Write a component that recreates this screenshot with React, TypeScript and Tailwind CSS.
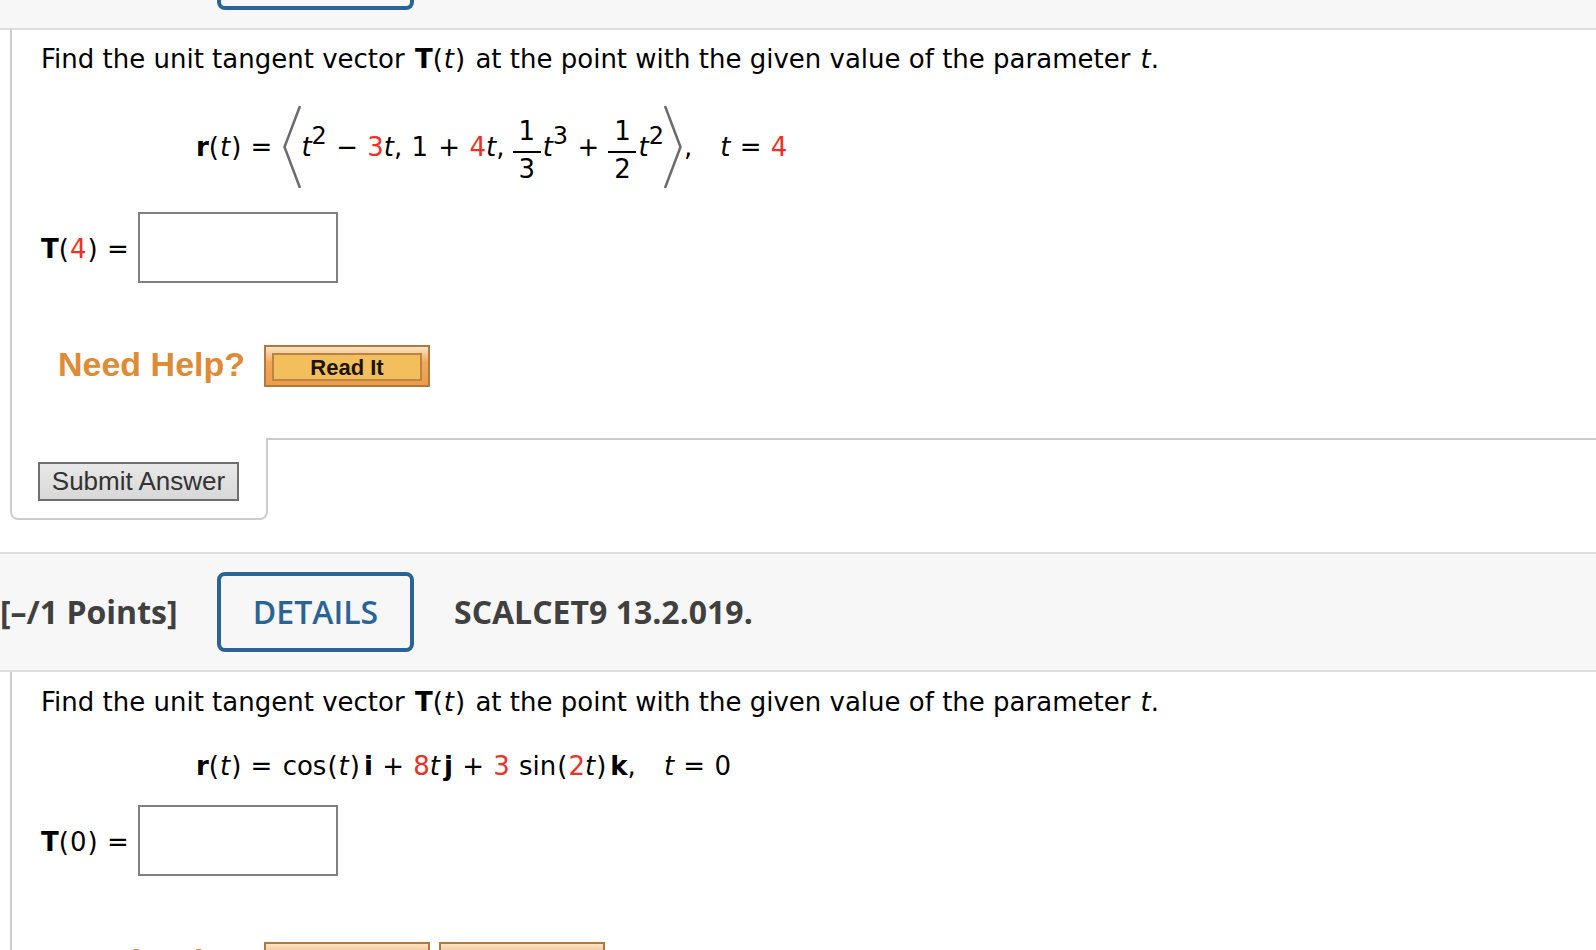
import type { ReactNode } from "react";

function Red({ children }: { children: ReactNode }) {
  return <span className="text-[#ee3124]">{children}</span>;
}

function Sup({ children }: { children: ReactNode }) {
  return <sup className="relative -top-3 align-baseline text-[24px] leading-none">{children}</sup>;
}

function Op({ children }: { children: ReactNode }) {
  return <span className="mx-px">{children}</span>;
}

function Paren({ children }: { children: ReactNode }) {
  return (
    <>
      (<span className="mx-px">{children}</span>)
    </>
  );
}

function Fraction({ top, bottom }: { top: string; bottom: string }) {
  return (
    <span className="mt-1.5 flex w-7 flex-col text-center leading-6">
      <span className="border-b-2 border-black pb-2">{top}</span>
      <span className="pt-1">{bottom}</span>
    </span>
  );
}

function AngleBracket({ side }: { side: "left" | "right" }) {
  return (
    <svg width="18" height="82" viewBox="0 0 18 82" fill="none" stroke="#6b6b6b" strokeWidth="2.5" aria-hidden="true">
      <path d={side === "left" ? "M17 0 L1.5 41 L17 82" : "M1 0 L16.5 41 L1 82"} />
    </svg>
  );
}

function QuestionHeader({ points, source }: { points: string; source: string }) {
  return (
    <header className="flex h-[120px] items-center border-y-2 border-[#ddd] bg-[#f7f7f7] font-['Open_Sans',sans-serif] text-[32px] font-bold whitespace-nowrap text-[#404040]">
      <h2 className="w-[217px]">{points}</h2>
      <button type="button" className="h-20 w-[197px] rounded-lg border-4 border-[#2a6496] font-semibold text-[#2a6496]">
        DETAILS
      </button>
      <span className="ml-10">{source}</span>
    </header>
  );
}

function Prompt() {
  return (
    <p className="leading-8">
      Find the unit tangent vector{" "}
      <b className="ml-0.5">T</b>
      <Paren>
        <i>t</i>
      </Paren>{" "}
      <span className="ml-0.5">
        at the point with the given value of the parameter <i className="ml-0.5">t</i>.
      </span>
    </p>
  );
}

function Answer({ id, at }: { id: string; at: ReactNode }) {
  return (
    <div className="flex items-center">
      <label htmlFor={id} className="w-[97px] pt-0.5 leading-8 whitespace-nowrap">
        <b>T</b>
        <Paren>{at}</Paren> <Op>=</Op>
      </label>
      <input id={id} type="text" className="h-[71px] w-[200px] border-2 border-[#808080] bg-white px-2 outline-none" />
    </div>
  );
}

function HelpButton({ children }: { children: ReactNode }) {
  return (
    <button
      type="button"
      className="h-[42px] w-[166px] border-2 border-[#b07a3e] bg-linear-to-b from-[#fde3c6] via-[#f0a95c] via-40% to-[#ec9c48] p-1.5 pb-1 text-[22px] font-bold text-[#1c1505]"
    >
      <span className="flex h-full items-center justify-center border-2 border-[#b98546] bg-[#f2bf5c]">{children}</span>
    </button>
  );
}

function NeedHelp({ options }: { options: string[] }) {
  return (
    <div className="flex items-center gap-[9px] pl-[17px] font-['Liberation_Sans',sans-serif]">
      <span className="w-[197px] pb-1 text-[34px] leading-9 font-bold whitespace-nowrap text-[#df8a35]">Need Help?</span>
      {options.map((option) => (
        <HelpButton key={option}>{option}</HelpButton>
      ))}
    </div>
  );
}

export default function App() {
  return (
    <main className="h-screen overflow-hidden bg-white font-['DejaVu_Sans',sans-serif] text-[26px] text-black">
      {/* Tail end of the previous question's header */}
      <div className="h-[30px] border-b-2 border-[#ddd] bg-[#f7f7f7] pl-[217px]">
        <button
          type="button"
          aria-label="Details"
          className="block h-2.5 w-[197px] rounded-b-lg border-4 border-t-0 border-[#2a6496]"
        />
      </div>

      <section>
        <div className="ml-2.5 h-[408px] border-l-2 border-[#ccc] pt-[13px] pl-[29px]">
          <Prompt />
          <div className="mt-[31px] ml-[155px] flex items-center leading-8 whitespace-pre">
            <span>
              <b>r</b>
              <Paren>
                <i>t</i>
              </Paren>{" "}
              <Op>=</Op>
            </span>
            <span className="ml-2.5">
              <AngleBracket side="left" />
            </span>
            <span>
              <i>t</i>
              <Sup>2</Sup> <Op>−</Op> <Red>3</Red>
              <i>t</i>, <Op>1</Op> <Op>+</Op> <Red>4</Red>
              <i>t</i>,{" "}
            </span>
            <Fraction top="1" bottom="3" />
            <span className="ml-0.5">
              <i>t</i>
              <Sup>3</Sup> <Op>+</Op>{" "}
            </span>
            <Fraction top="1" bottom="2" />
            <span className="ml-0.5">
              <i>t</i>
              <Sup>2</Sup>
            </span>
            <AngleBracket side="right" />
            <span className="ml-0.5">,</span>
            <span className="ml-7">
              <i>t</i> <Op>=</Op> <Red>4</Red>
            </span>
          </div>
          <div className="mt-6">
            <Answer id="answer-t4" at={<Red>4</Red>} />
          </div>
          <div className="mt-[62px]">
            <NeedHelp options={["Read It"]} />
          </div>
        </div>
        <div className="ml-2.5 flex">
          <div className="h-[82px] w-[258px] rounded-b-lg border-2 border-t-0 border-[#ccc] pt-6 pl-[26px]">
            <button
              type="button"
              className="block h-[39px] w-[201px] border-2 border-[#6f6f6f] bg-linear-to-b from-[#e8e8e8] to-[#d8d8d8] pb-0.5 font-['Liberation_Sans',sans-serif] leading-8 whitespace-nowrap text-[#333]"
            >
              Submit Answer
            </button>
          </div>
          <div className="-ml-0.5 h-0.5 flex-1 bg-[#ccc]" />
        </div>
      </section>

      <section className="mt-8">
        <QuestionHeader points="[–/1 Points]" source="SCALCET9 13.2.019." />
        <div className="ml-2.5 border-l-2 border-[#ccc] pt-3.5 pb-16 pl-[29px]">
          <Prompt />
          <p className="mt-8 ml-[155px] leading-8 whitespace-pre">
            <b>r</b>
            <Paren>
              <i>t</i>
            </Paren>{" "}
            <Op>=</Op> <Op>cos</Op>
            <Paren>
              <i>t</i>
            </Paren>
            <b className="ml-1">i</b> <Op>+</Op> <Red>8</Red>
            <i>t</i>
            <b className="ml-1">j</b> <Op>+</Op> <Red>3</Red> <Op>sin</Op>
            <Paren>
              <Red>2</Red>
              <i>t</i>
            </Paren>
            <b className="ml-1">k</b>,
            <span className="ml-7">
              <i>t</i> <Op>=</Op> 0
            </span>
          </p>
          <div className="mt-[23px]">
            <Answer id="answer-t0" at="0" />
          </div>
          <div className="mt-[66px]">
            <NeedHelp options={["Read It", "Watch It"]} />
          </div>
        </div>
      </section>
    </main>
  );
}
